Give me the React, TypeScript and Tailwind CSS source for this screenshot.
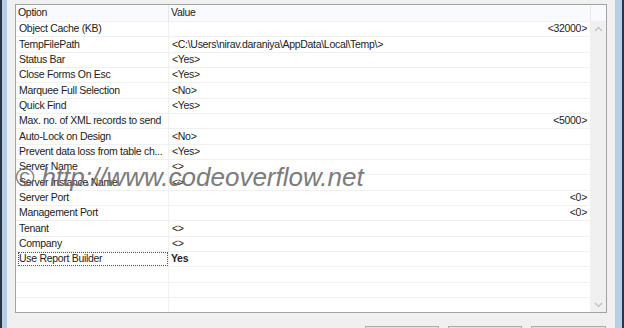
import React from "react";

const rows: { o: string; v: string; right?: boolean; sel?: boolean }[] = [
  { o: "Object Cache (KB)", v: "<32000>", right: true },
  { o: "TempFilePath", v: "<C:\\Users\\nirav.daraniya\\AppData\\Local\\Temp\\>" },
  { o: "Status Bar", v: "<Yes>" },
  { o: "Close Forms On Esc", v: "<Yes>" },
  { o: "Marquee Full Selection", v: "<No>" },
  { o: "Quick Find", v: "<Yes>" },
  { o: "Max. no. of XML records to send", v: "<5000>", right: true },
  { o: "Auto-Lock on Design", v: "<No>" },
  { o: "Prevent data loss from table ch...", v: "<Yes>" },
  { o: "Server Name", v: "<>" },
  { o: "Server Instance Name", v: "<>" },
  { o: "Server Port", v: "<0>", right: true },
  { o: "Management Port", v: "<0>", right: true },
  { o: "Tenant", v: "<>" },
  { o: "Company", v: "<>" },
  { o: "Use Report Builder", v: "Yes", sel: true },
  { o: "", v: "" },
  { o: "", v: "" },
  { o: "", v: "" },
];

export default function App() {
  return (
    <div
      className="relative flex h-[328px] w-[624px] overflow-hidden bg-[#f0f0f0] text-[10.5px] tracking-[-0.3px] text-[#222]"
      style={{ fontFamily: '"Liberation Sans", Arial, sans-serif' }}
    >
      <div className="w-[2px] bg-[#2a3646]" />
      <div className="w-[5px] bg-[#b5cfe9]" />
      <div className="flex flex-1 flex-col overflow-hidden pl-[8px] pr-[8px] pt-[4px]">
        <div className="flex h-[309px] shrink-0 flex-col overflow-hidden border border-[#a3a3a3] bg-white">
          <div className="flex h-[17px] shrink-0 border-b border-[#eef0f3] bg-[#f8fafd]">
            <div className="flex w-[153px] items-center border-r border-[#e6e8eb] pl-[2px]">Option</div>
            <div className="flex flex-1 items-center border-r border-[#e6e8eb] pl-[2px]">Value</div>
            <div className="w-[15px]" />
          </div>
          <div className="flex flex-1 overflow-hidden">
            <div className="flex flex-1 flex-col">
              {rows.map((r, i) => (
                <div key={i} className="flex h-[15.33px] shrink-0 whitespace-nowrap border-b border-[#f0f0f0]">
                  <div className="flex w-[153px] items-center overflow-hidden border-r border-[#f0f0f0] pl-[2px]">
                    {r.sel ? (
                      <div className="flex h-full w-full items-center border border-dotted border-[#555]">{r.o}</div>
                    ) : (
                      <span className="pl-[1px]">{r.o}</span>
                    )}
                  </div>
                  <div
                    className={
                      r.right
                        ? "flex flex-1 items-center justify-end pr-[3px]"
                        : r.sel
                          ? "flex flex-1 items-center pl-[2px] font-bold"
                          : "flex flex-1 items-center pl-[3px]"
                    }
                  >
                    {r.v}
                  </div>
                </div>
              ))}
            </div>
            <div className="flex w-[16px] flex-col items-center justify-between bg-[#f0f0f0] py-[4px]">
              <svg width="9" height="6" viewBox="0 0 9 6" fill="none">
                <path d="M1 5L4.5 1.5L8 5" stroke="#c2c2c2" strokeWidth="1.3" />
              </svg>
              <svg width="9" height="6" viewBox="0 0 9 6" fill="none">
                <path d="M1 1L4.5 4.5L8 1" stroke="#c2c2c2" strokeWidth="1.3" />
              </svg>
            </div>
          </div>
        </div>
        <div className="mt-[13px] flex shrink-0 justify-end gap-[9px] pr-[1px]">
          <div className="h-[10px] w-[74px] border border-[#adadad] bg-[#e1e1e1]" />
          <div className="h-[10px] w-[74px] border border-[#adadad] bg-[#e1e1e1]" />
          <div className="h-[10px] w-[75px] border border-[#adadad] bg-[#e1e1e1]" />
        </div>
      </div>
      <div className="w-[7px] bg-[#b5cfe9]" />
      <div className="w-[2px] bg-[#2a3646]" />
      <div
        className="pointer-events-none absolute left-[15px] top-[158px] text-[26px] italic tracking-normal text-[#6e6e6e] opacity-90"
        style={{ fontFamily: '"Liberation Sans", Arial, sans-serif' }}
      >
        © http://www.codeoverflow.net
      </div>
    </div>
  );
}
